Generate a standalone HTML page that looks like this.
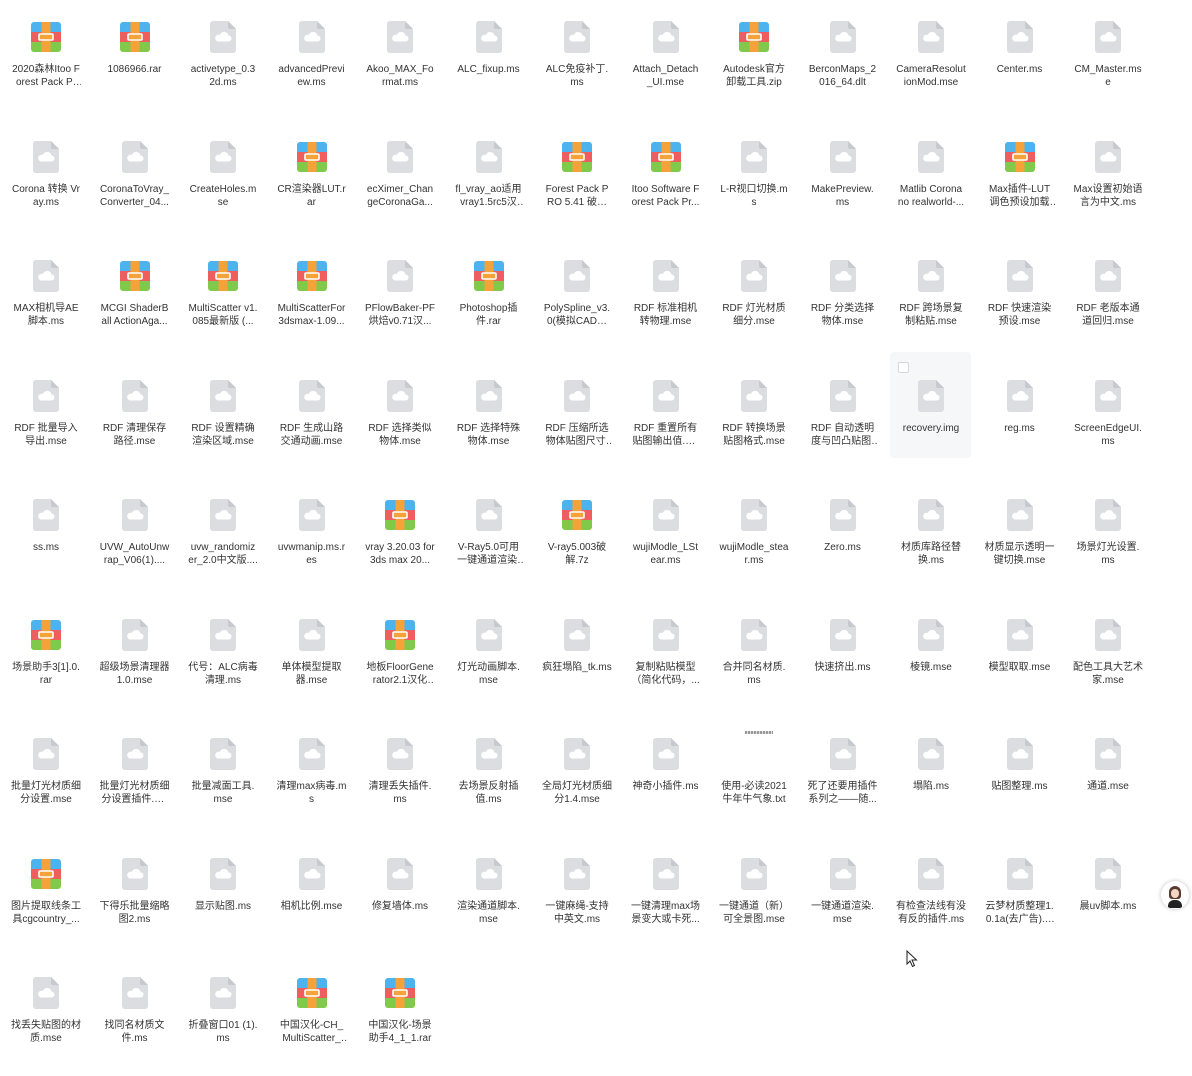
<!DOCTYPE html>
<html><head><meta charset="utf-8">
<style>
html,body{margin:0;padding:0;background:#fff;width:1192px;height:1040px;overflow:hidden;}
.g{position:absolute;left:2px;top:0;display:grid;grid-template-columns:repeat(13,88.5px);grid-auto-rows:119.5px;}
.c{position:relative;text-align:center;}
.c svg{position:absolute;left:50%;transform:translateX(-50%);}
.f svg{top:21px;width:26px;height:32px;}
.r svg{top:22px;width:30px;height:30px;}
.t{position:absolute;top:63px;left:9px;width:70px;font:10px/13px "Liberation Sans","Noto Sans CJK SC",sans-serif;color:#333;word-break:break-all;display:-webkit-box;-webkit-line-clamp:2;-webkit-box-orient:vertical;overflow:hidden;}
.sel{position:absolute;left:890px;top:352px;width:81px;height:106px;background:#f6f7f9;border-radius:4px;}
.cb{position:absolute;left:898px;top:362px;width:9px;height:9px;border:1px solid #d6d8dc;border-radius:2px;background:#fff;}
</style></head><body>
<svg width="0" height="0" style="position:absolute">
<defs>
<symbol id="fi" viewBox="0 0 26 32"><path d="M3 0H18L26 8V29a3 3 0 0 1-3 3H3a3 3 0 0 1-3-3V3a3 3 0 0 1 3-3z" fill="#dcdde0"/><path d="M18 0V6a2 2 0 0 0 2 2H26z" fill="#c7c9ce"/><path d="M7.5 20.5h11a3 3 0 0 0 0-6 4.5 4.5 0 0 0-8.6-0.6A3.3 3.3 0 0 0 7.5 20.5z" fill="#fff"/></symbol>
<symbol id="ri" viewBox="0 0 30 30"><clipPath id="cp"><rect width="30" height="30" rx="3"/></clipPath><g clip-path="url(#cp)"><rect width="30" height="10" fill="#4db3ef"/><rect y="10" width="30" height="10" fill="#ef5e5e"/><rect y="20" width="30" height="10" fill="#80c94a"/><rect x="10.5" width="9" height="30" fill="#f5a23a"/></g><rect x="8" y="12" width="14" height="6" rx="1" fill="#f5a23a" stroke="#fff" stroke-width="1.6"/></symbol>
</defs></svg>
<div class="sel"></div><div class="cb"></div>
<div class="g">
<div class="c r"><svg><use href="#ri"/></svg><div class="t">2020森林Itoo Forest Pack Pro...</div></div>
<div class="c r"><svg><use href="#ri"/></svg><div class="t">1086966.rar</div></div>
<div class="c f"><svg><use href="#fi"/></svg><div class="t">activetype_0.32d.ms</div></div>
<div class="c f"><svg><use href="#fi"/></svg><div class="t">advancedPreview.ms</div></div>
<div class="c f"><svg><use href="#fi"/></svg><div class="t">Akoo_MAX_Format.ms</div></div>
<div class="c f"><svg><use href="#fi"/></svg><div class="t">ALC_fixup.ms</div></div>
<div class="c f"><svg><use href="#fi"/></svg><div class="t">ALC免疫补丁.ms</div></div>
<div class="c f"><svg><use href="#fi"/></svg><div class="t">Attach_Detach_UI.mse</div></div>
<div class="c r"><svg><use href="#ri"/></svg><div class="t">Autodesk官方卸载工具.zip</div></div>
<div class="c f"><svg><use href="#fi"/></svg><div class="t">BerconMaps_2016_64.dlt</div></div>
<div class="c f"><svg><use href="#fi"/></svg><div class="t">CameraResolutionMod.mse</div></div>
<div class="c f"><svg><use href="#fi"/></svg><div class="t">Center.ms</div></div>
<div class="c f"><svg><use href="#fi"/></svg><div class="t">CM_Master.mse</div></div>

<div class="c f"><svg><use href="#fi"/></svg><div class="t">Corona 转换 Vray.ms</div></div>
<div class="c f"><svg><use href="#fi"/></svg><div class="t">CoronaToVray_Converter_04...</div></div>
<div class="c f"><svg><use href="#fi"/></svg><div class="t">CreateHoles.mse</div></div>
<div class="c r"><svg><use href="#ri"/></svg><div class="t">CR渲染器LUT.rar</div></div>
<div class="c f"><svg><use href="#fi"/></svg><div class="t">ecXimer_ChangeCoronaGa...</div></div>
<div class="c f"><svg><use href="#fi"/></svg><div class="t">fl_vray_ao适用vray1.5rc5汉化...</div></div>
<div class="c r"><svg><use href="#ri"/></svg><div class="t">Forest Pack PRO 5.41 破解版...</div></div>
<div class="c r"><svg><use href="#ri"/></svg><div class="t">Itoo Software Forest Pack Pr...</div></div>
<div class="c f"><svg><use href="#fi"/></svg><div class="t">L-R视口切换.ms</div></div>
<div class="c f"><svg><use href="#fi"/></svg><div class="t">MakePreview.ms</div></div>
<div class="c f"><svg><use href="#fi"/></svg><div class="t">Matlib Corona no realworld-...</div></div>
<div class="c r"><svg><use href="#ri"/></svg><div class="t">Max插件-LUT调色预设加载脚...</div></div>
<div class="c f"><svg><use href="#fi"/></svg><div class="t">Max设置初始语言为中文.ms</div></div>

<div class="c f"><svg><use href="#fi"/></svg><div class="t">MAX相机导AE脚本.ms</div></div>
<div class="c r"><svg><use href="#ri"/></svg><div class="t">MCGI ShaderBall ActionAga...</div></div>
<div class="c r"><svg><use href="#ri"/></svg><div class="t">MultiScatter v1.085最新版 (...</div></div>
<div class="c r"><svg><use href="#ri"/></svg><div class="t">MultiScatterFor3dsmax-1.09...</div></div>
<div class="c f"><svg><use href="#fi"/></svg><div class="t">PFlowBaker-PF烘焙v0.71汉...</div></div>
<div class="c r"><svg><use href="#ri"/></svg><div class="t">Photoshop插件.rar</div></div>
<div class="c f"><svg><use href="#fi"/></svg><div class="t">PolySpline_v3.0(模拟CAD画线...</div></div>
<div class="c f"><svg><use href="#fi"/></svg><div class="t">RDF 标准相机转物理.mse</div></div>
<div class="c f"><svg><use href="#fi"/></svg><div class="t">RDF 灯光材质细分.mse</div></div>
<div class="c f"><svg><use href="#fi"/></svg><div class="t">RDF 分类选择物体.mse</div></div>
<div class="c f"><svg><use href="#fi"/></svg><div class="t">RDF 跨场景复制粘贴.mse</div></div>
<div class="c f"><svg><use href="#fi"/></svg><div class="t">RDF 快速渲染预设.mse</div></div>
<div class="c f"><svg><use href="#fi"/></svg><div class="t">RDF 老版本通道回归.mse</div></div>

<div class="c f"><svg><use href="#fi"/></svg><div class="t">RDF 批量导入导出.mse</div></div>
<div class="c f"><svg><use href="#fi"/></svg><div class="t">RDF 清理保存路径.mse</div></div>
<div class="c f"><svg><use href="#fi"/></svg><div class="t">RDF 设置精确渲染区域.mse</div></div>
<div class="c f"><svg><use href="#fi"/></svg><div class="t">RDF 生成山路交通动画.mse</div></div>
<div class="c f"><svg><use href="#fi"/></svg><div class="t">RDF 选择类似物体.mse</div></div>
<div class="c f"><svg><use href="#fi"/></svg><div class="t">RDF 选择特殊物体.mse</div></div>
<div class="c f"><svg><use href="#fi"/></svg><div class="t">RDF 压缩所选物体贴图尺寸.mse</div></div>
<div class="c f"><svg><use href="#fi"/></svg><div class="t">RDF 重置所有贴图输出值.mse</div></div>
<div class="c f"><svg><use href="#fi"/></svg><div class="t">RDF 转换场景贴图格式.mse</div></div>
<div class="c f"><svg><use href="#fi"/></svg><div class="t">RDF 自动透明度与凹凸贴图.mse</div></div>
<div class="c f"><svg><use href="#fi"/></svg><div class="t">recovery.img</div></div>
<div class="c f"><svg><use href="#fi"/></svg><div class="t">reg.ms</div></div>
<div class="c f"><svg><use href="#fi"/></svg><div class="t">ScreenEdgeUI.ms</div></div>

<div class="c f"><svg><use href="#fi"/></svg><div class="t">ss.ms</div></div>
<div class="c f"><svg><use href="#fi"/></svg><div class="t">UVW_AutoUnwrap_V06(1)....</div></div>
<div class="c f"><svg><use href="#fi"/></svg><div class="t">uvw_randomizer_2.0中文版....</div></div>
<div class="c f"><svg><use href="#fi"/></svg><div class="t">uvwmanip.ms.res</div></div>
<div class="c r"><svg><use href="#ri"/></svg><div class="t">vray 3.20.03 for 3ds max 20...</div></div>
<div class="c f"><svg><use href="#fi"/></svg><div class="t">V-Ray5.0可用一键通道渲染.ms</div></div>
<div class="c r"><svg><use href="#ri"/></svg><div class="t">V-ray5.003破解.7z</div></div>
<div class="c f"><svg><use href="#fi"/></svg><div class="t">wujiModle_LStear.ms</div></div>
<div class="c f"><svg><use href="#fi"/></svg><div class="t">wujiModle_stear.ms</div></div>
<div class="c f"><svg><use href="#fi"/></svg><div class="t">Zero.ms</div></div>
<div class="c f"><svg><use href="#fi"/></svg><div class="t">材质库路径替换.ms</div></div>
<div class="c f"><svg><use href="#fi"/></svg><div class="t">材质显示透明一键切换.mse</div></div>
<div class="c f"><svg><use href="#fi"/></svg><div class="t">场景灯光设置.ms</div></div>

<div class="c r"><svg><use href="#ri"/></svg><div class="t">场景助手3[1].0.rar</div></div>
<div class="c f"><svg><use href="#fi"/></svg><div class="t">超级场景清理器1.0.mse</div></div>
<div class="c f"><svg><use href="#fi"/></svg><div class="t">代号：ALC病毒清理.ms</div></div>
<div class="c f"><svg><use href="#fi"/></svg><div class="t">单体模型提取器.mse</div></div>
<div class="c r"><svg><use href="#ri"/></svg><div class="t">地板FloorGenerator2.1汉化版...</div></div>
<div class="c f"><svg><use href="#fi"/></svg><div class="t">灯光动画脚本.mse</div></div>
<div class="c f"><svg><use href="#fi"/></svg><div class="t">疯狂塌陷_tk.ms</div></div>
<div class="c f"><svg><use href="#fi"/></svg><div class="t">复制粘贴模型（简化代码，...</div></div>
<div class="c f"><svg><use href="#fi"/></svg><div class="t">合并同名材质.ms</div></div>
<div class="c f"><svg><use href="#fi"/></svg><div class="t">快速挤出.ms</div></div>
<div class="c f"><svg><use href="#fi"/></svg><div class="t">棱镜.mse</div></div>
<div class="c f"><svg><use href="#fi"/></svg><div class="t">模型取取.mse</div></div>
<div class="c f"><svg><use href="#fi"/></svg><div class="t">配色工具大艺术家.mse</div></div>

<div class="c f"><svg><use href="#fi"/></svg><div class="t">批量灯光材质细分设置.mse</div></div>
<div class="c f"><svg><use href="#fi"/></svg><div class="t">批量灯光材质细分设置插件.mse</div></div>
<div class="c f"><svg><use href="#fi"/></svg><div class="t">批量减面工具.mse</div></div>
<div class="c f"><svg><use href="#fi"/></svg><div class="t">清理max病毒.ms</div></div>
<div class="c f"><svg><use href="#fi"/></svg><div class="t">清理丢失插件.ms</div></div>
<div class="c f"><svg><use href="#fi"/></svg><div class="t">去场景反射插值.ms</div></div>
<div class="c f"><svg><use href="#fi"/></svg><div class="t">全局灯光材质细分1.4.mse</div></div>
<div class="c f"><svg><use href="#fi"/></svg><div class="t">神奇小插件.ms</div></div>
<div class="c"><div style="position:absolute;left:35px;top:14px;width:28px;height:3px;background:repeating-linear-gradient(90deg,#999 0 2px,#ddd 2px 3px);"></div><div class="t">使用-必读2021牛年牛气象.txt</div></div>
<div class="c f"><svg><use href="#fi"/></svg><div class="t">死了还要用插件系列之——随...</div></div>
<div class="c f"><svg><use href="#fi"/></svg><div class="t">塌陷.ms</div></div>
<div class="c f"><svg><use href="#fi"/></svg><div class="t">贴图整理.ms</div></div>
<div class="c f"><svg><use href="#fi"/></svg><div class="t">通道.mse</div></div>

<div class="c r"><svg><use href="#ri"/></svg><div class="t">图片提取线条工具cgcountry_...</div></div>
<div class="c f"><svg><use href="#fi"/></svg><div class="t">下得乐批量缩略图2.ms</div></div>
<div class="c f"><svg><use href="#fi"/></svg><div class="t">显示贴图.ms</div></div>
<div class="c f"><svg><use href="#fi"/></svg><div class="t">相机比例.mse</div></div>
<div class="c f"><svg><use href="#fi"/></svg><div class="t">修复墙体.ms</div></div>
<div class="c f"><svg><use href="#fi"/></svg><div class="t">渲染通道脚本.mse</div></div>
<div class="c f"><svg><use href="#fi"/></svg><div class="t">一键麻绳-支持中英文.ms</div></div>
<div class="c f"><svg><use href="#fi"/></svg><div class="t">一键清理max场景变大或卡死...</div></div>
<div class="c f"><svg><use href="#fi"/></svg><div class="t">一键通道（新）可全景图.mse</div></div>
<div class="c f"><svg><use href="#fi"/></svg><div class="t">一键通道渲染.mse</div></div>
<div class="c f"><svg><use href="#fi"/></svg><div class="t">有检查法线有没有反的插件.ms</div></div>
<div class="c f"><svg><use href="#fi"/></svg><div class="t">云梦材质整理1.0.1a(去广告).ms</div></div>
<div class="c f"><svg><use href="#fi"/></svg><div class="t">晨uv脚本.ms</div></div>

<div class="c f"><svg><use href="#fi"/></svg><div class="t">找丢失贴图的材质.mse</div></div>
<div class="c f"><svg><use href="#fi"/></svg><div class="t">找同名材质文件.ms</div></div>
<div class="c f"><svg><use href="#fi"/></svg><div class="t">折叠窗口01 (1).ms</div></div>
<div class="c r"><svg><use href="#ri"/></svg><div class="t">中国汉化-CH_MultiScatter_1...</div></div>
<div class="c r"><svg><use href="#ri"/></svg><div class="t">中国汉化-场景助手4_1_1.rar</div></div>
</div>
<div style="position:absolute;left:1161px;top:881px;width:28px;height:28px;border-radius:50%;background:#fff;box-shadow:0 0 4px rgba(0,0,0,.25);overflow:hidden;">
<div style="position:absolute;left:8px;top:5px;width:12px;height:13px;border-radius:6px 6px 3px 3px;background:#5a3a2e;"></div>
<div style="position:absolute;left:10px;top:8px;width:8px;height:9px;border-radius:4px;background:#f3d6c6;"></div>
<div style="position:absolute;left:7px;top:19px;width:14px;height:8px;border-radius:6px 6px 0 0;background:#222;"></div>
</div>
<svg style="position:absolute;left:906px;top:950px" width="12" height="18" viewBox="0 0 12 18"><path d="M1 1V14L4 11L6.5 16.5L8.5 15.5L6 10H10.5Z" fill="#fff" stroke="#222" stroke-width="1"/></svg>
</body></html>
